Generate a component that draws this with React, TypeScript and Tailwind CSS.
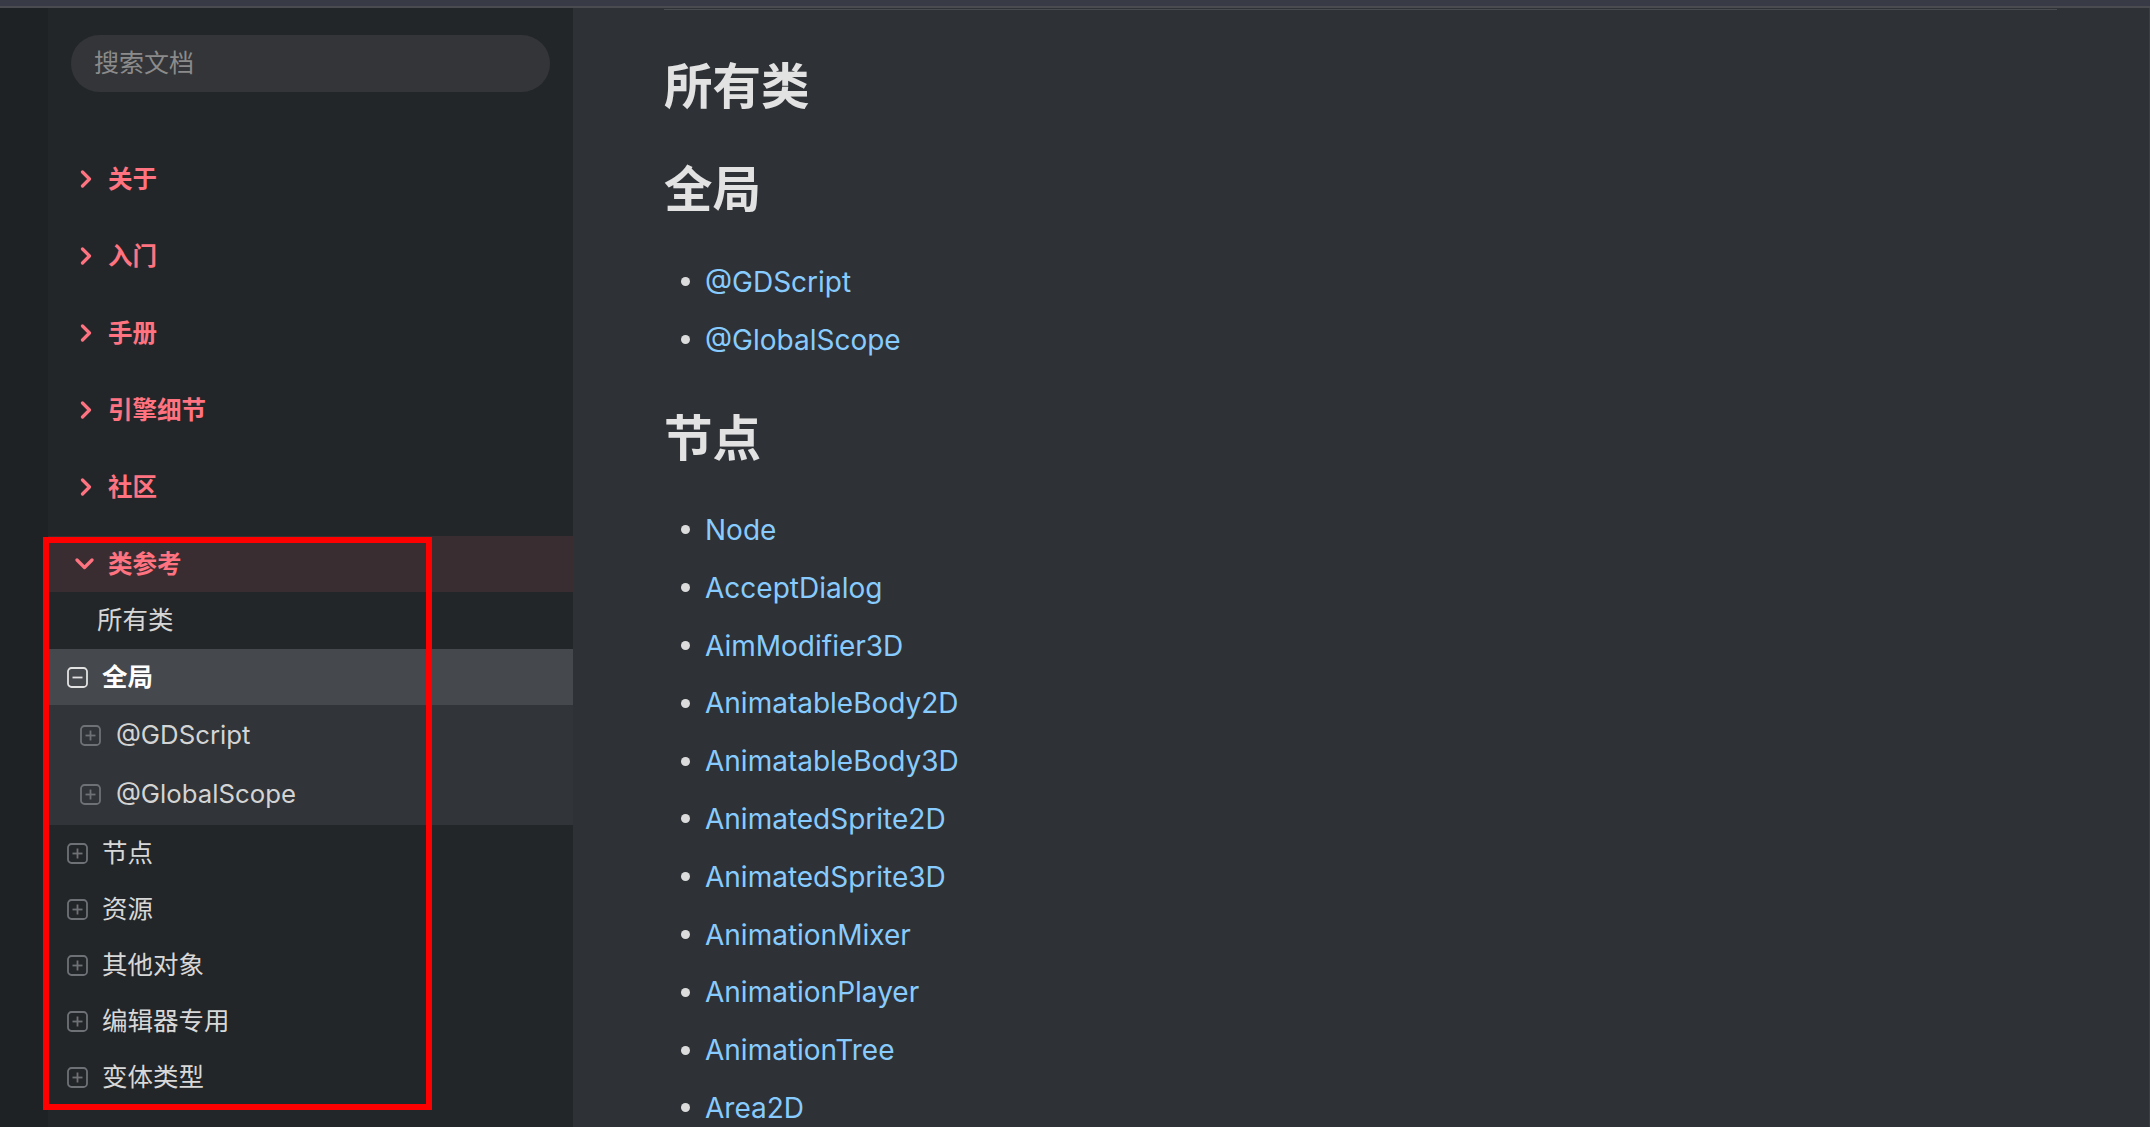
import { ReactNode } from 'react';

const navItems = ['关于', '入门', '手册', '引擎细节', '社区'];
const globalItems = ['@GDScript', '@GlobalScope'];
const groups = ['节点', '资源', '其他对象', '编辑器专用', '变体类型'];
const nodeClasses = [
    'Node',
    'AcceptDialog',
    'AimModifier3D',
    'AnimatableBody2D',
    'AnimatableBody3D',
    'AnimatedSprite2D',
    'AnimatedSprite3D',
    'AnimationMixer',
    'AnimationPlayer',
    'AnimationTree',
    'Area2D',
    'Area3D',
];

function ChevronRight() {
    return (
        <svg width="12" height="18" viewBox="0 0 12 18" className="shrink-0">
            <path d="M2.5 2 L9.5 9 L2.5 16" fill="none" stroke="#ff7381" strokeWidth="3.2" strokeLinecap="round" strokeLinejoin="round" />
        </svg>
    );
}

function ChevronDown() {
    return (
        <svg width="19" height="12" viewBox="0 0 19 12" className="shrink-0">
            <path d="M2 2 L9.5 9.5 L17 2" fill="none" stroke="#ff7381" strokeWidth="3.2" strokeLinecap="round" strokeLinejoin="round" />
        </svg>
    );
}

// boxed plus / minus toggles used by the class tree
function TreeToggle({ open, color }: { open?: boolean; color: string }) {
    return (
        <svg width="21" height="21" viewBox="0 0 21 21" className="shrink-0">
            <rect x="1" y="1" width="19" height="19" rx="3.5" fill="none" stroke={color} strokeWidth="1.8" />
            <path d="M5.5 10.5 H15.5" stroke={color} strokeWidth="1.8" />
            {!open && <path d="M10.5 5.5 V15.5" stroke={color} strokeWidth="1.8" />}
        </svg>
    );
}

function Row({ className, children }: { className: string; children: ReactNode }) {
    return <div className={`flex items-center ${className}`}>{children}</div>;
}

function Sidebar() {
    return (
        <aside className="w-[525px] shrink-0 bg-[#232629] flex flex-col">
            <div className="mt-[27px] ml-[23px] w-[479px] h-[57px] rounded-full bg-[#343538] flex items-center pl-[23px]">
                <span className="text-[25px] text-[#8b8b8b]">搜索文档</span>
            </div>

            <nav className="mt-[59px] flex flex-col gap-[21px]">
                {navItems.map((item) => (
                    <Row key={item} className="h-[56px] pl-[32px] gap-[16px]">
                        <ChevronRight />
                        <span className="text-[24.5px] font-bold text-[#ff7381]">{item}</span>
                    </Row>
                ))}
                <div className="flex flex-col">
                    <Row className="h-[56px] pl-[27px] gap-[14px] bg-[#3a2d32]">
                        <ChevronDown />
                        <span className="text-[24.5px] font-bold text-[#ff7381]">类参考</span>
                    </Row>
                    <Row className="h-[57px] pl-[49px]">
                        <span className="text-[25.5px] text-[#d6d6d6]">所有类</span>
                    </Row>
                    <Row className="h-[56px] pl-[19px] gap-[14px] bg-[#45484c]">
                        <TreeToggle open color="#e2e2e2" />
                        <span className="text-[25.5px] font-bold text-white">全局</span>
                    </Row>
                    <div className="bg-[#313438] pt-[1px] pb-[1px]">
                        {globalItems.map((item) => (
                            <Row key={item} className="h-[59px] pl-[32px] gap-[15px]">
                                <TreeToggle color="#6e7176" />
                                <span className="text-[25.75px] text-[#d4d4d4]">{item}</span>
                            </Row>
                        ))}
                    </div>
                    {groups.map((g) => (
                        <Row key={g} className="h-[56px] pl-[19px] gap-[14px]">
                            <TreeToggle color="#6e7176" />
                            <span className="text-[25.5px] text-[#d8d8d8]">{g}</span>
                        </Row>
                    ))}
                </div>
            </nav>
        </aside>
    );
}

function ClassList({ items }: { items: string[] }) {
    return (
        <ul className="pl-[17px]">
            {items.map((name) => (
                <li key={name} className="h-[57.8px] flex items-center gap-[15px]">
                    <span className="w-[9px] h-[9px] rounded-full bg-[#dcdcdc] shrink-0" />
                    <a className="text-[28px] text-[#88ccff]">{name}</a>
                </li>
            ))}
        </ul>
    );
}

export default function App() {
    return (
        <div className="relative w-[2150px] h-[1127px] overflow-hidden flex flex-col bg-[#2e3136] font-['Inter','Noto_Sans_CJK_SC',sans-serif]">
            <div className="h-[6px] bg-[#383b45] shrink-0" />
            <div className="h-[2px] bg-[#4a4b51] shrink-0" />
            <div className="flex flex-1 min-h-0">
                <div className="w-[48px] shrink-0 bg-[#1f2225]" />
                <Sidebar />
                <main className="flex-1 pl-[91px] pt-px border-r border-[#3b3e43]">
                    <div className="w-[1393px] h-px bg-[#4a4c50]" />
                    <h1 className="mt-[48px] h-[58px] flex items-center text-[48.5px] font-bold text-[#e2e2e2]">所有类</h1>
                    <h2 className="mt-[45px] h-[58px] flex items-center text-[48.5px] font-bold text-[#e2e2e2]">全局</h2>
                    <div className="mt-[34px]">
                        <ClassList items={globalItems} />
                    </div>
                    <h2 className="mt-[41.5px] h-[58px] flex items-center text-[48.5px] font-bold text-[#e2e2e2]">节点</h2>
                    <div className="mt-[33px]">
                        <ClassList items={nodeClasses} />
                    </div>
                </main>
            </div>
            {/* red annotation frame drawn over the class reference section */}
            <div className="absolute left-[43px] top-[537px] w-[389px] h-[573px] border-[6px] border-[#ff0000] pointer-events-none" />
        </div>
    );
}
